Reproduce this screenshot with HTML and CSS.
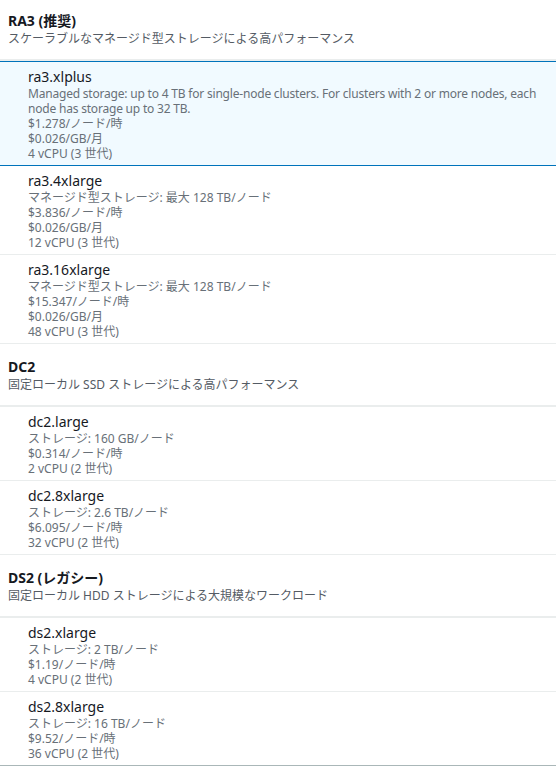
FILE: index.html
```html
<!DOCTYPE html>
<html lang="ja">
<head>
  <meta charset="UTF-8" />
  <meta name="viewport" content="width=device-width, initial-scale=1" />
  <title>ノードの種類</title>
  <link rel="stylesheet" href="styles.css">
</head>
<body>

  <ul class="node-list">
    <!-- RA3 -->
    <li class="group">
      <div class="group-title">RA3 (推奨)</div>
      <div class="group-desc">スケーラブルなマネージド型ストレージによる高パフォーマンス</div>
    </li>
    <li class="option selected">
      <div class="option-name">ra3.xlplus</div>
      <div class="option-meta note">Managed storage: up to 4 TB for single-node clusters. For clusters with 2 or more nodes, each node has storage up to 32 TB.</div>
      <div class="option-meta">$1.278/ノード/時</div>
      <div class="option-meta">$0.026/GB/月</div>
      <div class="option-meta">4 vCPU (3 世代)</div>
    </li>
    <li class="option">
      <div class="option-name">ra3.4xlarge</div>
      <div class="option-meta">マネージド型ストレージ: 最大 128 TB/ノード</div>
      <div class="option-meta">$3.836/ノード/時</div>
      <div class="option-meta">$0.026/GB/月</div>
      <div class="option-meta">12 vCPU (3 世代)</div>
    </li>
    <li class="option">
      <div class="option-name">ra3.16xlarge</div>
      <div class="option-meta">マネージド型ストレージ: 最大 128 TB/ノード</div>
      <div class="option-meta">$15.347/ノード/時</div>
      <div class="option-meta">$0.026/GB/月</div>
      <div class="option-meta">48 vCPU (3 世代)</div>
    </li>

    <!-- DC2 -->
    <li class="group">
      <div class="group-title">DC2</div>
      <div class="group-desc">固定ローカル SSD ストレージによる高パフォーマンス</div>
    </li>
    <li class="option">
      <div class="option-name">dc2.large</div>
      <div class="option-meta">ストレージ: 160 GB/ノード</div>
      <div class="option-meta">$0.314/ノード/時</div>
      <div class="option-meta">2 vCPU (2 世代)</div>
    </li>
    <li class="option">
      <div class="option-name">dc2.8xlarge</div>
      <div class="option-meta">ストレージ: 2.6 TB/ノード</div>
      <div class="option-meta">$6.095/ノード/時</div>
      <div class="option-meta">32 vCPU (2 世代)</div>
    </li>

    <!-- DS2 -->
    <li class="group">
      <div class="group-title">DS2 (レガシー)</div>
      <div class="group-desc">固定ローカル HDD ストレージによる大規模なワークロード</div>
    </li>
    <li class="option">
      <div class="option-name">ds2.xlarge</div>
      <div class="option-meta">ストレージ: 2 TB/ノード</div>
      <div class="option-meta">$1.19/ノード/時</div>
      <div class="option-meta">4 vCPU (2 世代)</div>
    </li>
    <li class="option last">
      <div class="option-name">ds2.8xlarge</div>
      <div class="option-meta">ストレージ: 16 TB/ノード</div>
      <div class="option-meta">$9.52/ノード/時</div>
      <div class="option-meta">36 vCPU (2 世代)</div>
    </li>
  </ul>

</body>
</html>
```

FILE: styles.css
```css
body {
  margin: 0;
  background-color: #ffffff;
  font-family: "Noto Sans", "Noto Sans CJK JP", sans-serif;
  color: #16191f;
}

.node-list {
  list-style: none;
  margin: 0;
  padding: 0;
}

/* Group headers */
.group {
  padding: 13px 8px 12px;
  border-bottom: 2px solid #eaeded;
}

.group:first-child {
  padding-top: 11px;
}

.group-title {
  font-size: 14px;
  line-height: 20px;
  font-weight: bold;
  color: #16191f;
}

.group-desc {
  font-size: 12px;
  line-height: 16px;
  color: #545b64;
}

/* Options */
.option {
  padding: 6px 8px 4px 28px;
  border-bottom: 1px solid #eaeded;
}

.option.selected {
  background-color: #f1faff;
  border-top: 1px solid #0073bb;
  border-bottom: 1px solid #0073bb;
}

.option.last {
  border-bottom: 1px solid #aab7b8;
}

.option-name {
  font-size: 14px;
  line-height: 18px;
  color: #16191f;
}

.option-meta {
  font-size: 12px;
  line-height: 15px;
  color: #687078;
}

.option-meta.note {
  letter-spacing: -0.2px;
}
```
